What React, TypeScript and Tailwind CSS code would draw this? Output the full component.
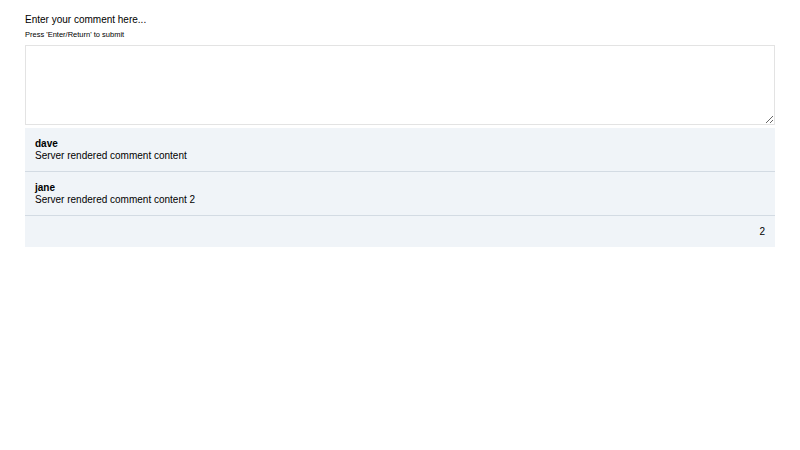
type Comment = {
  author: string;
  text: string;
};

const comments: Comment[] = [
  { author: "dave", text: "Server rendered comment content" },
  { author: "jane", text: "Server rendered comment content 2" },
];

export default function App() {
  return (
    <div className="min-h-screen bg-white px-[25px] pt-[14px] font-['Liberation_Sans',Arial,sans-serif] text-black">
      <div className="text-[10px] leading-[12px]">Enter your comment here...</div>
      <div className="mt-[4px] text-[7.5px] leading-[9px]">
        Press 'Enter/Return' to submit
      </div>

      <textarea className="mt-[6px] block h-[80px] w-full resize border border-[#e3e3e3] bg-white text-[10px] outline-none" />

      <ul className="mt-[3px]">
        {comments.map((comment) => (
          <li
            key={comment.author}
            className="border-b border-[#d3dbe3] bg-[#f0f4f8] px-[10px] pt-[10px] pb-[9px] text-[10px] leading-[12px]"
          >
            <div className="font-bold">{comment.author}</div>
            <div>{comment.text}</div>
          </li>
        ))}
      </ul>

      <div className="flex h-[31px] items-center justify-end bg-[#f0f4f8] pr-[10px] text-[10px]">
        {comments.length}
      </div>
    </div>
  );
}
